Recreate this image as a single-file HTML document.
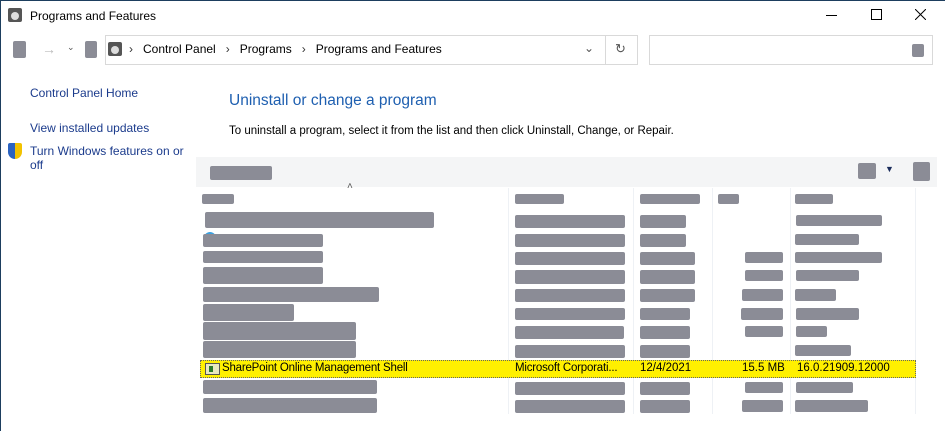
<!DOCTYPE html><html><head><style>
body{margin:0;width:945px;height:431px;overflow:hidden;background:#fff;font-family:"Liberation Sans",sans-serif;position:relative}
.a{position:absolute}
.b{position:absolute;background:#8b8c96;border-radius:2px}
.t{position:absolute;white-space:nowrap;font-size:12px;color:#000}
.l{color:#1b3b8c}
</style></head><body>
<div class="a" style="left:0;top:0;width:945px;height:1px;background:#1d3e5e"></div>
<div class="a" style="left:0;top:0;width:1px;height:431px;background:#1d3e5e"></div>
<!-- title -->
<div class="a" style="left:8px;top:8px;width:14px;height:14px;background:#555;border-radius:2px"><div class="a" style="left:3px;top:4px;width:8px;height:8px;border-radius:50%;background:#ddd"></div></div>
<div class="t" style="left:30px;top:9px;font-size:12px">Programs and Features</div>
<div class="a" style="left:826px;top:15px;width:11px;height:1px;background:#000"></div>
<div class="a" style="left:871px;top:9px;width:9px;height:9px;border:1px solid #000"></div>
<svg class="a" style="left:915px;top:9px" width="11" height="11"><path d="M0 0L11 11M11 0L0 11" stroke="#000" stroke-width="1"/></svg>
<!-- nav -->
<div class="b" style="left:13px;top:41px;width:13px;height:17px"></div>
<div class="t" style="left:42px;top:41px;color:#bbb;font-size:14px">→</div>
<div class="t" style="left:67px;top:42px;color:#555;font-size:9px">⌄</div>
<div class="b" style="left:85px;top:41px;width:12px;height:17px"></div>
<div class="a" style="left:105px;top:35px;width:531px;height:28px;border:1px solid #d9d9d9"></div>
<div class="a" style="left:605px;top:36px;width:1px;height:28px;background:#d9d9d9"></div>
<div class="a" style="left:108px;top:42px;width:14px;height:14px;background:#555;border-radius:2px"><div class="a" style="left:3px;top:4px;width:8px;height:8px;border-radius:50%;background:#ddd"></div></div>
<div class="t" style="left:129px;top:42px;font-size:12px;color:#333">›&nbsp;&nbsp; <span style="color:#000">Control Panel</span>&nbsp;&nbsp; ›&nbsp;&nbsp; <span style="color:#000">Programs</span>&nbsp;&nbsp; ›&nbsp;&nbsp; <span style="color:#000">Programs and Features</span></div>
<div class="t" style="left:584px;top:41px;color:#555">⌄</div>
<div class="t" style="left:615px;top:41px;color:#555;font-size:13px">↻</div>
<div class="a" style="left:649px;top:35px;width:282px;height:28px;border:1px solid #d9d9d9"></div>
<div class="b" style="left:912px;top:44px;width:12px;height:13px"></div>
<!-- left -->
<div class="t l" style="left:30px;top:86px">Control Panel Home</div>
<div class="t l" style="left:30px;top:121px">View installed updates</div>
<div class="a" style="left:8px;top:143px;width:14px;height:16px;background:linear-gradient(90deg,#2a62c0 50%,#f2c200 50%);border-radius:2px 2px 7px 7px"></div>
<div class="t l" style="left:30px;top:144px;line-height:14px">Turn Windows features on or<br>off</div>
<div class="t" style="left:229px;top:92px;font-size:15.5px;color:#1e5fb0">Uninstall or change a program</div>
<div class="t" style="left:229px;top:125px;font-size:11.5px">To uninstall a program, select it from the list and then click Uninstall, Change, or Repair.</div>
<!-- toolbar -->
<div class="a" style="left:196px;top:157px;width:741px;height:30px;background:#f4f5f6"></div>
<div class="b" style="left:210px;top:166px;width:62px;height:14px"></div>
<div class="b" style="left:858px;top:163px;width:18px;height:16px"></div>
<div class="t" style="left:885px;top:164px;font-size:9px;color:#1b2d5c">▼</div>
<div class="b" style="left:913px;top:162px;width:17px;height:19px"></div>
<!-- column separators -->
<div class="a" style="left:508px;top:188px;width:1px;height:226px;background:#eef1f5"></div>
<div class="a" style="left:633px;top:188px;width:1px;height:226px;background:#eef1f5"></div>
<div class="a" style="left:712px;top:188px;width:1px;height:226px;background:#eef1f5"></div>
<div class="a" style="left:790px;top:188px;width:1px;height:226px;background:#eef1f5"></div>
<div class="a" style="left:915px;top:188px;width:1px;height:226px;background:#eef1f5"></div>
<div class="t" style="left:347px;top:181px;font-size:10px;color:#555">˄</div>
<!-- headers -->
<div class="b" style="left:202px;top:194px;width:32px;height:10px"></div>
<div class="b" style="left:515px;top:194px;width:49px;height:10px"></div>
<div class="b" style="left:640px;top:194px;width:60px;height:10px"></div>
<div class="b" style="left:718px;top:194px;width:21px;height:10px"></div>
<div class="b" style="left:795px;top:194px;width:38px;height:10px"></div>
<!-- name col -->
<div class="b" style="left:205px;top:212px;width:229px;height:16px"></div>
<div class="a" style="left:204px;top:232px;width:12px;height:6px;border-radius:6px 6px 0 0;background:#3ba0e0"></div>
<div class="b" style="left:203px;top:234px;width:120px;height:13px"></div>
<div class="b" style="left:203px;top:251px;width:120px;height:12px"></div>
<div class="b" style="left:203px;top:267px;width:120px;height:17px"></div>
<div class="b" style="left:203px;top:287px;width:176px;height:15px"></div>
<div class="b" style="left:203px;top:304px;width:91px;height:17px"></div>
<div class="b" style="left:203px;top:322px;width:153px;height:18px"></div>
<div class="b" style="left:203px;top:341px;width:153px;height:17px"></div>
<div class="b" style="left:203px;top:380px;width:174px;height:14px"></div>
<div class="b" style="left:203px;top:398px;width:174px;height:15px"></div>
<!-- publisher -->
<div class="b" style="left:515px;top:215px;width:110px;height:13px"></div>
<div class="b" style="left:515px;top:234px;width:110px;height:13px"></div>
<div class="b" style="left:515px;top:252px;width:110px;height:13px"></div>
<div class="b" style="left:515px;top:270px;width:110px;height:14px"></div>
<div class="b" style="left:515px;top:289px;width:110px;height:13px"></div>
<div class="b" style="left:515px;top:308px;width:110px;height:12px"></div>
<div class="b" style="left:515px;top:326px;width:109px;height:13px"></div>
<div class="b" style="left:515px;top:345px;width:110px;height:13px"></div>
<div class="b" style="left:515px;top:382px;width:110px;height:13px"></div>
<div class="b" style="left:515px;top:400px;width:110px;height:13px"></div>
<!-- date -->
<div class="b" style="left:640px;top:215px;width:46px;height:13px"></div>
<div class="b" style="left:640px;top:234px;width:46px;height:13px"></div>
<div class="b" style="left:640px;top:252px;width:55px;height:13px"></div>
<div class="b" style="left:640px;top:270px;width:55px;height:14px"></div>
<div class="b" style="left:640px;top:289px;width:55px;height:13px"></div>
<div class="b" style="left:640px;top:308px;width:50px;height:12px"></div>
<div class="b" style="left:640px;top:326px;width:50px;height:13px"></div>
<div class="b" style="left:640px;top:345px;width:50px;height:13px"></div>
<div class="b" style="left:640px;top:382px;width:50px;height:13px"></div>
<div class="b" style="left:640px;top:400px;width:50px;height:13px"></div>
<!-- size -->
<div class="b" style="left:745px;top:252px;width:38px;height:11px"></div>
<div class="b" style="left:745px;top:270px;width:38px;height:11px"></div>
<div class="b" style="left:742px;top:289px;width:41px;height:12px"></div>
<div class="b" style="left:741px;top:308px;width:42px;height:12px"></div>
<div class="b" style="left:745px;top:326px;width:38px;height:11px"></div>
<div class="b" style="left:745px;top:382px;width:38px;height:11px"></div>
<div class="b" style="left:742px;top:400px;width:41px;height:12px"></div>
<!-- version -->
<div class="b" style="left:796px;top:215px;width:86px;height:11px"></div>
<div class="b" style="left:795px;top:234px;width:64px;height:11px"></div>
<div class="b" style="left:795px;top:252px;width:87px;height:11px"></div>
<div class="b" style="left:796px;top:270px;width:63px;height:11px"></div>
<div class="b" style="left:795px;top:289px;width:41px;height:12px"></div>
<div class="b" style="left:796px;top:308px;width:63px;height:12px"></div>
<div class="b" style="left:796px;top:326px;width:31px;height:11px"></div>
<div class="b" style="left:795px;top:345px;width:56px;height:11px"></div>
<div class="b" style="left:796px;top:382px;width:57px;height:11px"></div>
<div class="b" style="left:795px;top:400px;width:73px;height:12px"></div>
<!-- highlight -->
<div class="a" style="left:200px;top:360px;width:714px;height:16px;background:#fff000;border:1px dotted #666"></div>
<div class="a" style="left:205px;top:363px;width:13px;height:10px;border:1px solid #555;background:#e8e8c0"><div class="a" style="left:3px;top:2px;width:4px;height:6px;background:#2a7a2a"></div></div>
<div class="t" style="left:222px;top:362px;font-size:11.5px;letter-spacing:-0.2px">SharePoint Online Management Shell</div>
<div class="t" style="left:515px;top:362px;font-size:11.5px;letter-spacing:-0.2px">Microsoft Corporati...</div>
<div class="t" style="left:640px;top:362px;font-size:11.5px">12/4/2021</div>
<div class="t" style="left:742px;top:362px;font-size:11.5px">15.5 MB</div>
<div class="t" style="left:797px;top:362px;font-size:11.5px">16.0.21909.12000</div>
</body></html>
